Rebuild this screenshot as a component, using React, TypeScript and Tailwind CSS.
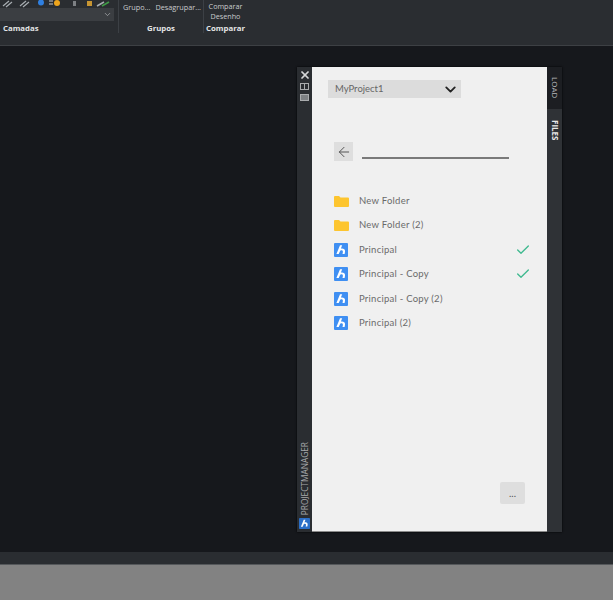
import { ArrowLeft, Check, ChevronDown, X } from 'lucide-react';

const ROWS = [
    { name: 'New Folder', type: 'folder' },
    { name: 'New Folder (2)', type: 'folder' },
    { name: 'Principal', type: 'file', loaded: true },
    { name: 'Principal - Copy', type: 'file', loaded: true },
    { name: 'Principal - Copy (2)', type: 'file' },
    { name: 'Principal (2)', type: 'file' },
];

const FolderIcon = () => (
    <svg width="15" height="13" viewBox="0 0 15 13">
        <path d="M0 2a1 1 0 0 1 1-1h4l1.5 1.5H14a1 1 0 0 1 1 1V11a1 1 0 0 1-1 1H1a1 1 0 0 1-1-1z" fill="#fdc52f" />
    </svg>
);

const LogoMark = ({ size, bg }: { size: number; bg: string }) => (
    <svg width={size} height={size} viewBox="0 0 14 14">
        <rect width="14" height="14" rx="1" fill={bg} />
        <path d="M6 2.2h2.2L6.9 5.6c1.9-.5 3.6.2 4 1.7.3 1 .1 2.2-.3 3.6H8.5c.4-1.3.5-2.2.3-2.8-.2-.8-1.2-1-2.6-.4l-1.5 3.4H2.4z" fill="#fff" />
    </svg>
);

const RibbonGroup = ({ label, width, left, border = true, children }: { label: string; width: string; left?: boolean; border?: boolean; children: React.ReactNode }) => (
    <div className={`flex flex-col justify-between h-[33px] ${width} ${border ? 'border-r border-[#3c4045]' : ''}`}>
        {children}
        <span className={`${left ? 'pl-[3px]' : 'text-center'} text-[7.8px] leading-[10px] font-bold text-[#e4e5e6]`}>{label}</span>
    </div>
);

export default function App() {
    return (
        <div className="w-[613px] h-[600px] flex flex-col overflow-hidden bg-[#16181c] font-['Open_Sans',sans-serif]">
            {/* Ribbon */}
            <div className="h-[46px] shrink-0 bg-[#2a2d31] border-b border-[#3d4044] flex">
                <RibbonGroup label="Camadas" width="w-[119px]" left>
                    <div className="flex flex-col">
                        <div className="h-[8px] pl-[2px] overflow-hidden">
                            <svg width="112" height="8" viewBox="0 0 112 8">
                                <path d="M1 6l6-5M4 7l6-5M18 6l6-5M21 7l6-5" stroke="#a8adb2" strokeWidth="1.2" fill="none" />
                                <circle cx="39" cy="2.5" r="3" fill="#2f7fe0" />
                                <circle cx="55" cy="3" r="3" fill="#eda41c" />
                                <path d="M47 1h4M47 4h4" stroke="#c5c8cb" strokeWidth="1" />
                                <rect x="71" y="1" width="3" height="5" fill="#7d8084" />
                                <rect x="85" y="1" width="5" height="5" fill="#c79532" />
                                <path d="M95 6l7-4" stroke="#a8adb2" strokeWidth="1.6" />
                                <path d="M100 6l7-4" stroke="#3f9a45" strokeWidth="1.6" />
                            </svg>
                        </div>
                        <div className="h-[13px] bg-[#3b3e42] mr-[4px] flex items-center justify-end pr-[2px]">
                            <ChevronDown size={9} className="text-[#a8abad]" />
                        </div>
                    </div>
                </RibbonGroup>
                <RibbonGroup label="Grupos" width="w-[85px]">
                    <div className="flex pl-[4px] gap-[5px] text-[7.3px] leading-[14px] text-[#c9cbcd]">
                        <span>Grupo...</span>
                        <span>Desagrupar...</span>
                    </div>
                </RibbonGroup>
                <RibbonGroup label="Comparar" width="w-[43px]" border={false}>
                    <div className="text-center text-[7.2px] leading-[9.5px] text-[#c9cbcd] pt-[2px]">
                        <div>Comparar</div>
                        <div>Desenho</div>
                    </div>
                </RibbonGroup>
            </div>

            {/* Drawing area */}
            <div className="flex-1 pl-[297px] pt-[21px]">
                <div className="w-[265px] h-[465px] flex shadow-[0_0_2px_#000]">
                    {/* Left title strip */}
                    <div className="w-[15px] bg-[#2a2d31] flex flex-col items-center">
                        <X size={12} strokeWidth={3.5} className="text-[#d5d6d7] mt-[2px]" />
                        <div className="w-[9px] h-[7px] border border-[#a9abad] mt-[2px] flex items-center justify-center">
                            <div className="w-[1px] h-[5px] bg-[#a9abad]" />
                        </div>
                        <div className="w-[9px] h-[7px] bg-[#7e8184] border border-[#a9abad] mt-[4px]" />
                        <span className="mt-auto mb-[3px] [writing-mode:vertical-rl] rotate-180 text-[8.3px] leading-[12px] text-[#a7a9ab]">PROJECTMANAGER</span>
                        <div className="mb-[3px]">
                            <LogoMark size={11} bg="#2c70c9" />
                        </div>
                    </div>

                    {/* Main panel */}
                    <div className="w-[235px] bg-[#f0f0f0] border-b border-[#8a8a8a] flex flex-col font-['Lato',sans-serif]">
                        <div className="mt-[13px] ml-[16px] w-[133px] h-[18px] bg-[#dcdcdc] flex items-center justify-between pl-[7px] pr-[2px]">
                            <span className="text-[9.5px] text-[#666]">MyProject1</span>
                            <ChevronDown size={17} strokeWidth={2.6} className="text-[#222]" />
                        </div>

                        <div className="mt-[44px] ml-[22px] flex items-end">
                            <div className="w-[19px] h-[19px] bg-[#dedede] flex items-center justify-center">
                                <ArrowLeft size={16} strokeWidth={1.5} className="text-[#555]" />
                            </div>
                            <div className="ml-[9px] w-[147px] h-[2px] mb-[2px] bg-[#7a7a7a]" />
                        </div>

                        <div className="mt-[28px] flex flex-col">
                            {ROWS.map((row) => (
                                <div key={row.name} className="h-[24.4px] flex items-center pl-[22px] pr-[16px]">
                                    <div className="w-[15px] flex justify-start">
                                        {row.type === 'folder' ? <FolderIcon /> : <LogoMark size={14} bg="#3f8ff2" />}
                                    </div>
                                    <span className="ml-[10px] text-[9.5px] tracking-[0.25px] text-[#6a6a6a]">{row.name}</span>
                                    {row.loaded && <Check size={16} strokeWidth={2} className="ml-auto text-[#3fb98f]" />}
                                </div>
                            ))}
                        </div>

                        <div className="mt-auto mb-[27px] mr-[22px] self-end w-[25px] h-[22px] rounded-[2px] bg-[#dedede] flex items-center justify-center text-[10px] text-[#555]">
                            ...
                        </div>
                    </div>

                    {/* Right tabs */}
                    <div className="w-[15px] bg-[#2f3236] flex flex-col">
                        <div className="h-[42px] bg-[#1c1e22] flex items-center justify-center">
                            <span className="[writing-mode:vertical-rl] text-[8px] leading-[10px] text-[#b5b7b9]">LOAD</span>
                        </div>
                        <div className="h-[42px] flex items-center justify-center">
                            <span className="[writing-mode:vertical-rl] text-[8px] leading-[10px] font-bold text-[#e8e8e8]">FILES</span>
                        </div>
                    </div>
                </div>
            </div>

            {/* Status bars */}
            <div className="h-[12px] shrink-0 bg-[#2a2d31]" />
            <div className="h-[36px] shrink-0 bg-[#828282] border-t border-[#55585b]" />
        </div>
    );
}
